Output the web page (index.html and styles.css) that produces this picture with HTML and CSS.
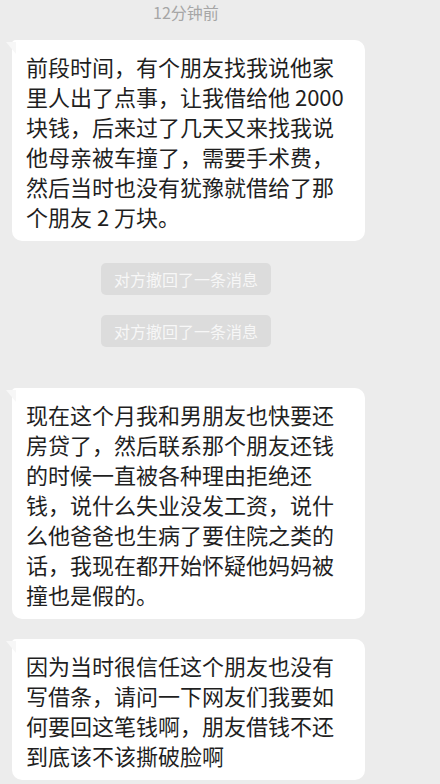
FILE: index.html
```html
<!DOCTYPE html>
<html lang="zh-CN">
<head>
<meta charset="utf-8">
<link rel="stylesheet" href="styles.css">
</head>
<body>
<div class="chat">
  <div class="time">12分钟前</div>
  <div class="bubble b1">前段时间，有个朋友找我说他家里人出了点事，让我借给他 2000 块钱，后来过了几天又来找我说他母亲被车撞了，需要手术费，然后当时也没有犹豫就借给了那个朋友 2 万块。</div>
  <div class="notice n1">对方撤回了一条消息</div>
  <div class="notice n2">对方撤回了一条消息</div>
  <div class="bubble b2">现在这个月我和男朋友也快要还房贷了，然后联系那个朋友还钱的时候一直被各种理由拒绝还钱，说什么失业没发工资，说什么他爸爸也生病了要住院之类的话，我现在都开始怀疑他妈妈被撞也是假的。</div>
  <div class="bubble b3">因为当时很信任这个朋友也没有写借条，请问一下网友们我要如何要回这笔钱啊，朋友借钱不还到底该不该撕破脸啊</div>
</div>
</body>
</html>
```

FILE: styles.css
```css
html, body {
  margin: 0;
  padding: 0;
  background: #ececec;
  height: 100%;
  overflow: hidden;
}
body {
  font-family: "Noto Sans CJK SC", "Noto Sans", sans-serif;
}
.chat {
  width: 372px;
  display: flex;
  flex-direction: column;
  align-items: center;
}
.time {
  font-size: 16px;
  line-height: 24px;
  color: #a6a6a6;
}
.bubble {
  position: relative;
  align-self: flex-start;
  box-sizing: border-box;
  margin-left: 12px;
  width: 353px;
  padding: 11px 17px 10px 14px;
  background: #ffffff;
  border-radius: 10px;
  border-top-left-radius: 4px;
  font-size: 22px;
  line-height: 30px;
  color: #1f1f1f;
  word-break: break-all;
}
.bubble::before {
  content: "";
  position: absolute;
  left: -6px;
  top: 2px;
  width: 10px;
  height: 12px;
  background: #f7f7f7;
  clip-path: polygon(0 0, 100% 0, 100% 100%);
}
.b1 { margin-top: 16px; }
.b2 { margin-top: 41px; }
.b3 { margin-top: 20px; }
.notice {
  font-size: 16px;
  line-height: 32px;
  height: 32px;
  padding: 0 13px;
  border-radius: 5px;
  background: #dcdcdc;
  color: #f7f7f7;
}
.n1 { margin-top: 22px; }
.n2 { margin-top: 20px; }
```
